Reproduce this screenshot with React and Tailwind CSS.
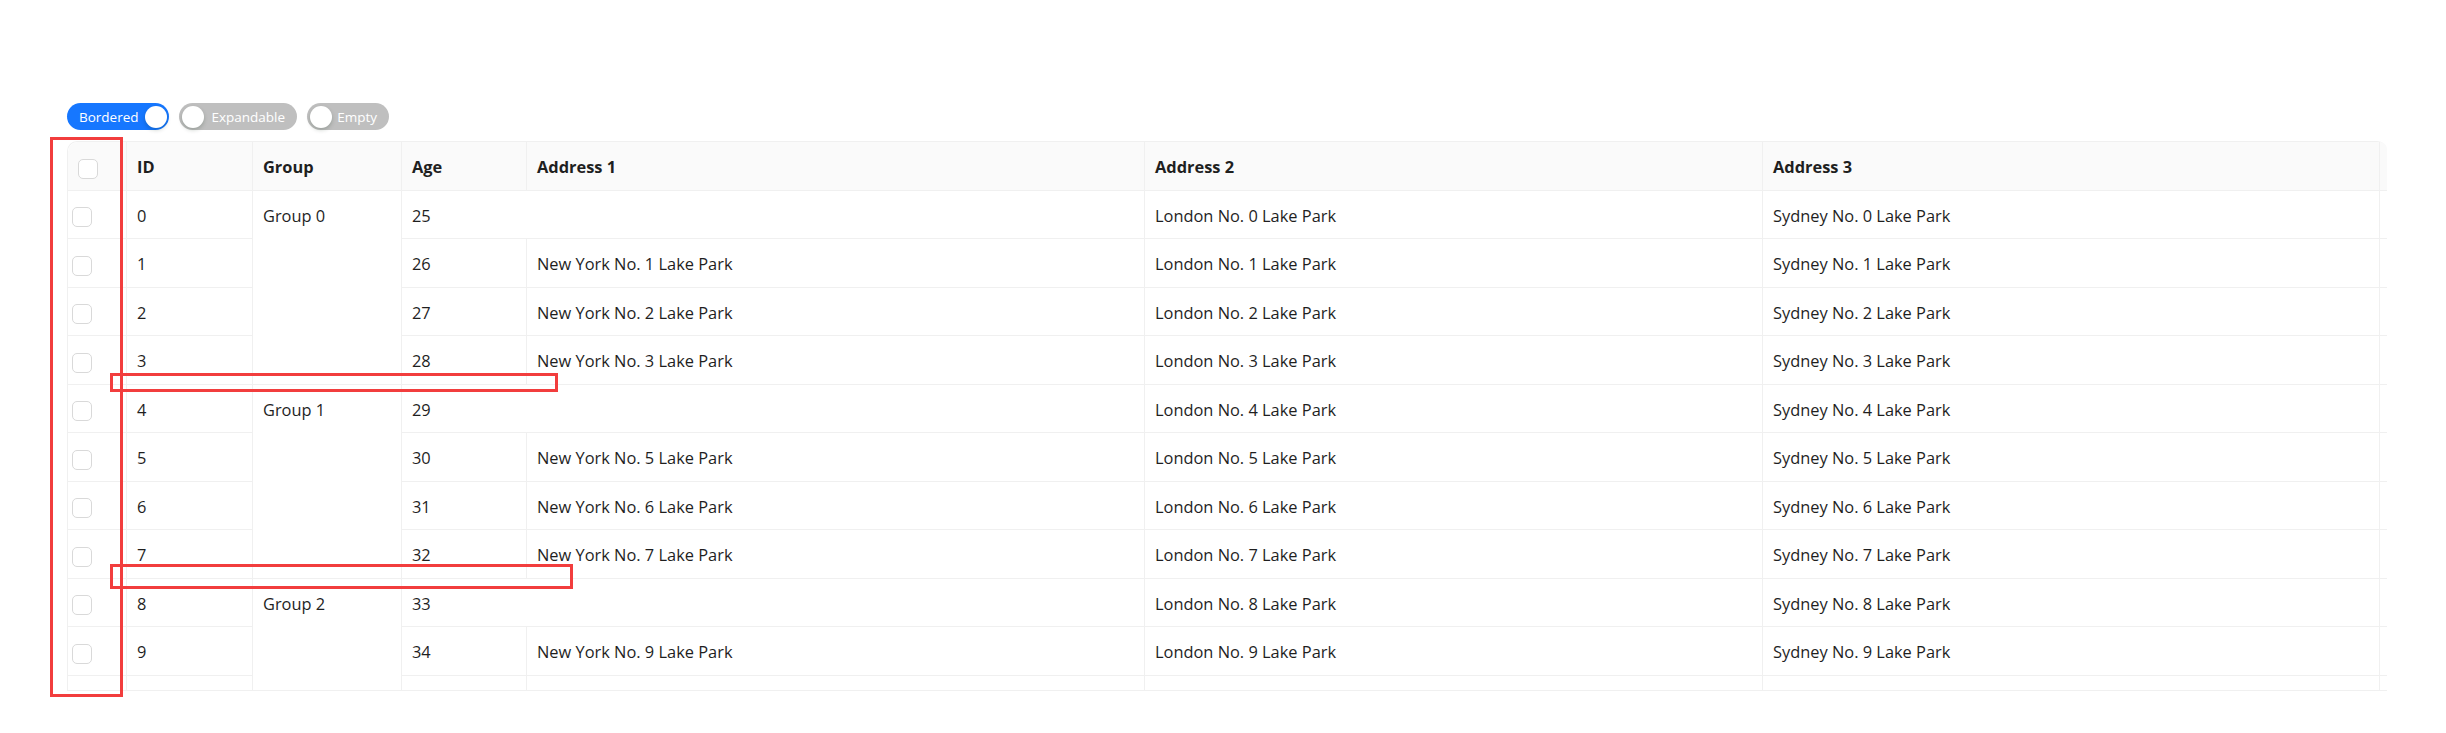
import React from 'react';

const font = { fontFamily: '"Open Sans", "Noto Sans", sans-serif' };

const cell = 'px-[10px] pt-[11px] pb-[9px] leading-[27.5px] border-r border-b border-[#f0f0f0] text-left align-top';

const Checkbox = () => (
  <span className="inline-block w-[20px] h-[20px] rounded-[5px] border border-[#d9d9d9] bg-white align-middle" />
);

const Switch = ({ label, checked, width }) => (
  <div
    className={`flex items-center h-[27px] rounded-full ${width} ${
      checked ? 'bg-[#1677ff] pl-[12px] pr-[2.5px] justify-between' : 'bg-[#bfbfbf] pl-[2.5px] pr-[12px] justify-between'
    }`}
  >
    {!checked && <span className="w-[22px] h-[22px] rounded-full bg-white shadow-[0_2px_4px_rgba(0,35,11,0.2)]" />}
    <span className="text-white text-[13.5px] leading-[22px]">{label}</span>
    {checked && <span className="w-[22px] h-[22px] rounded-full bg-white shadow-[0_2px_4px_rgba(0,35,11,0.2)]" />}
  </div>
);

const rows = Array.from({ length: 10 }, (_, i) => ({
  id: i,
  age: 25 + i,
  groupStart: i % 4 === 0,
  group: Math.floor(i / 4),
  span: i === 8 ? 3 : 4,
  a1: `New York No. ${i} Lake Park`,
  a2: `London No. ${i} Lake Park`,
  a3: `Sydney No. ${i} Lake Park`,
}));

const App = () => {
  return (
    <div className="relative w-[2446px] h-[733px] bg-white text-[#1f1f1f] text-[16.4px]" style={font}>
      <div className="pl-[67px] pt-[103px]">
        <div className="flex gap-[10px]">
          <Switch label="Bordered" checked width="w-[102px]" />
          <Switch label="Expandable" width="w-[118px]" />
          <Switch label="Empty" width="w-[82px]" />
        </div>

        <div className="mt-[11px] w-[2320px] border-t border-l border-[#f0f0f0] rounded-t-[10px]">
          <table className="table-fixed w-[2319px] border-separate border-spacing-0">
            <colgroup>
              <col className="w-[59px]" />
              <col className="w-[126px]" />
              <col className="w-[149px]" />
              <col className="w-[125px]" />
              <col className="w-[618px]" />
              <col className="w-[618px]" />
              <col className="w-[617px]" />
              <col className="w-[7px]" />
            </colgroup>
            <thead>
              <tr className="bg-[#fafafa] font-semibold">
                <th className={`${cell} text-center rounded-tl-[10px]`}><Checkbox /></th>
                <th className={cell}>ID</th>
                <th className={cell}>Group</th>
                <th className={cell}>Age</th>
                <th className={cell}>Address 1</th>
                <th className={cell}>Address 2</th>
                <th className={cell}>Address 3</th>
                <th className="border-b border-[#f0f0f0] rounded-tr-[10px]"></th>
              </tr>
            </thead>
            <tbody>
              {rows.map((r) => (
                <tr key={r.id}>
                  <td className={`${cell} pl-[4px]`}><Checkbox /></td>
                  <td className={cell}>{r.id}</td>
                  {r.groupStart && (
                    <td rowSpan={r.span} className={cell}>Group {r.group}</td>
                  )}
                  <td colSpan={r.groupStart ? 2 : 1} className={cell}>{r.age}</td>
                  {!r.groupStart && <td className={cell}>{r.a1}</td>}
                  <td className={cell}>{r.a2}</td>
                  <td className={cell}>{r.a3}</td>
                  <td className="border-b border-[#f0f0f0]"></td>
                </tr>
              ))}
              <tr className="h-[15px]">
                <td className="border-r border-b border-[#f0f0f0]"></td>
                <td className="border-r border-b border-[#f0f0f0]"></td>
                <td className="border-r border-b border-[#f0f0f0]"></td>
                <td className="border-r border-b border-[#f0f0f0]"></td>
                <td className="border-r border-b border-[#f0f0f0]"></td>
                <td className="border-r border-b border-[#f0f0f0]"></td>
                <td className="border-b border-[#f0f0f0]"></td>
              </tr>
            </tbody>
          </table>
        </div>
      </div>

      {/* annotation boxes */}
      <div className="absolute left-[50px] top-[137px] w-[73px] h-[560px] border-[3px] border-[#f23d3d]" />
      <div className="absolute left-[110px] top-[373px] w-[448px] h-[19px] border-[3px] border-[#f23d3d]" />
      <div className="absolute left-[110px] top-[564px] w-[463px] h-[25px] border-[3px] border-[#f23d3d]" />
    </div>
  );
};

export default App;
